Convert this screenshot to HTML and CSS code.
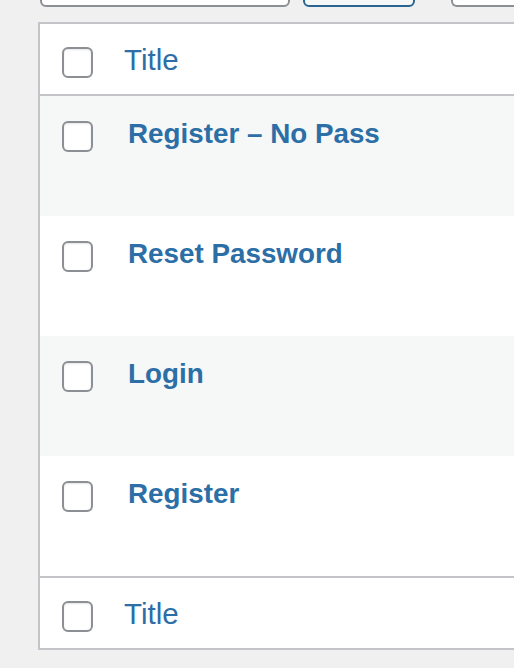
FILE: index.html
```html
<!DOCTYPE html>
<html lang="en">
<head>
<meta charset="utf-8">
<title>Forms</title>
<link rel="stylesheet" href="styles.css">
</head>
<body>
<div class="page">
  <div class="toolbar">
    <div class="field field-search"></div>
    <div class="btn btn-secondary"></div>
    <div class="field field-select"></div>
  </div>
  <div class="table">
    <div class="row row-head">
      <div class="cell-check"><input type="checkbox" class="cb" aria-label="Select all"></div>
      <a class="col-title" href="#">Title</a>
    </div>
    <div class="row row-item alt">
      <div class="cell-check"><input type="checkbox" class="cb" aria-label="Select"></div>
      <a class="item-title" href="#">Register – No Pass</a>
    </div>
    <div class="row row-item">
      <div class="cell-check"><input type="checkbox" class="cb" aria-label="Select"></div>
      <a class="item-title" href="#">Reset Password</a>
    </div>
    <div class="row row-item alt">
      <div class="cell-check"><input type="checkbox" class="cb" aria-label="Select"></div>
      <a class="item-title" href="#">Login</a>
    </div>
    <div class="row row-item">
      <div class="cell-check"><input type="checkbox" class="cb" aria-label="Select"></div>
      <a class="item-title" href="#">Register</a>
    </div>
    <div class="row row-foot">
      <div class="cell-check"><input type="checkbox" class="cb" aria-label="Select all"></div>
      <a class="col-title" href="#">Title</a>
    </div>
  </div>
</div>
</body>
</html>
```
FILE: styles.css
```css
html, body {
  margin: 0;
  padding: 0;
  background: #f0f0f1;
  overflow: hidden;
  font-family: "Liberation Sans", Arial, sans-serif;
}

.page {
  padding-left: 38px;
}

.toolbar {
  display: flex;
  align-items: flex-end;
  margin-top: -33px;
  padding-left: 2px;
  height: 40px;
}

.field, .btn {
  box-sizing: border-box;
  height: 40px;
  border: 2px solid #8c8f94;
  border-radius: 6px;
  background: #fff;
}

.field-search {
  width: 250px;
}

.btn-secondary {
  width: 112px;
  margin-left: 13px;
  border-color: #2a6591;
  background: #f6f7f7;
}

.field-select {
  flex: 1;
  margin-left: 36px;
  border-right: none;
  border-radius: 6px 0 0 6px;
}

.table {
  margin-top: 15px;
  background: #fff;
  border: 2px solid #c3c4c7;
  border-right: none;
  box-shadow: 0 1px 1px rgba(0, 0, 0, 0.04);
}

.row {
  display: flex;
  align-items: flex-start;
  box-sizing: border-box;
}

.row-head {
  height: 72px;
  border-bottom: 2px solid #c3c4c7;
}

.row-foot {
  height: 72px;
  border-top: 2px solid #c3c4c7;
}

.row-item {
  height: 120px;
  background: #fff;
}

.row-item.alt {
  background: #f6f7f7;
}

.cell-check {
  width: 84px;
  padding-left: 22px;
  box-sizing: border-box;
  flex: none;
}

.row-head .cell-check {
  padding-top: 23px;
}

.row-foot .cell-check {
  padding-top: 23px;
}

.row-item .cell-check {
  padding-top: 25px;
}

.cb {
  -webkit-appearance: none;
  appearance: none;
  display: block;
  margin: 0;
  width: 31px;
  height: 31px;
  box-sizing: border-box;
  border: 2px solid #8c8f94;
  border-radius: 6px;
  background: #fff;
  box-shadow: inset 0 1px 2px rgba(0, 0, 0, 0.1);
}

.col-title {
  display: block;
  font-size: 29.5px;
  line-height: 36px;
  color: #2c6ea6;
  text-decoration: none;
  margin-top: 18px;
}

.row-foot .col-title {
  margin-top: 18px;
}

.item-title {
  display: block;
  font-size: 27.8px;
  font-weight: 700;
  line-height: 36px;
  color: #2c6ea6;
  text-decoration: none;
  margin-top: 20px;
  margin-left: 4px;
}
```
